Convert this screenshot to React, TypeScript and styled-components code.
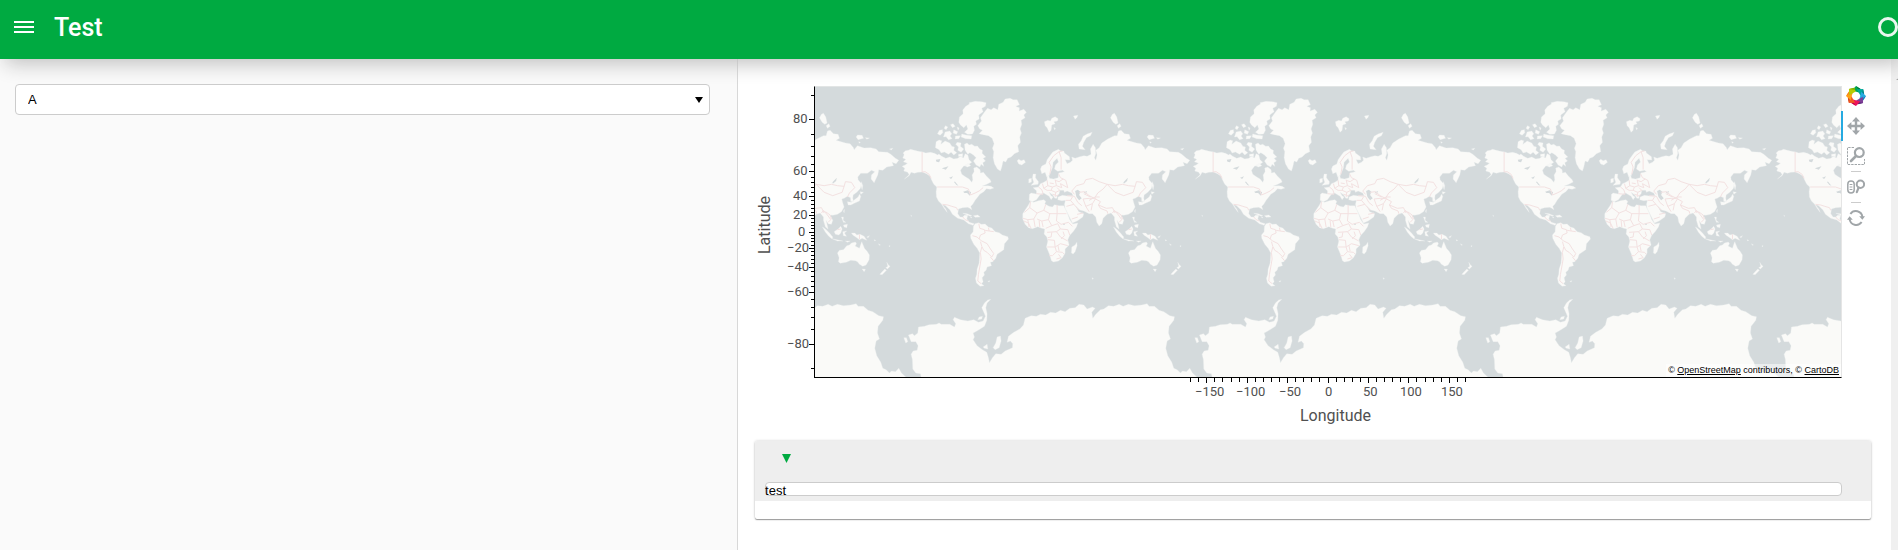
import React from "react";
import styled, { createGlobalStyle } from "styled-components";

const GREEN = "#00aa41";
const SEA = "#d4dadc";
const LAND = "#fafaf8";
const UI_FONT = '"Liberation Sans", Arial, sans-serif';

const GlobalStyle = createGlobalStyle`
  * { box-sizing: border-box; }
  html, body, #root { height: 100%; }
  body { margin: 0; background: #fff; font-family: ${UI_FONT}; overflow: hidden; }
`;

const Page = styled.div`
  display: flex;
  flex-direction: column;
  height: 100%;
`;

const Header = styled.header`
  position: relative;
  z-index: 1;
  display: flex;
  align-items: center;
  flex: none;
  height: 59px;
  padding: 0 0 5px 14px;
  background: ${GREEN};
  box-shadow: 5px 5px 20px silver;
`;

const MenuButton = styled.button`
  display: flex;
  padding: 0;
  border: 0;
  background: none;
  cursor: pointer;
`;

const Title = styled.a`
  margin-left: 20px;
  padding-top: 2px;
  color: #fff;
  font: 500 25px/32px Roboto, sans-serif;
  text-decoration: none;
`;

const BusyRing = styled.span`
  width: 20px;
  height: 20px;
  margin-left: auto;
  border: 3px solid #eaf7ef;
  border-radius: 50%;
`;

const Columns = styled.div`
  display: grid;
  grid-template-columns: 7fr 11fr;
  flex: 1;
  min-height: 0;
`;

const Sidebar = styled.aside`
  padding: 25px 27px 0 15px;
  background: #fafafa;
  border-right: 1px solid #d8d8d8;
`;

const SelectBox = styled.div`
  position: relative;
`;

const Select = styled.select`
  display: block;
  width: 100%;
  height: 31px;
  padding: 0 12px;
  border: 1px solid #ccc;
  border-radius: 4px;
  background: #fff;
  color: #000;
  font: 13px ${UI_FONT};
  appearance: none;
`;

const SelectArrow = styled.svg`
  position: absolute;
  top: 13px;
  right: 7px;
  pointer-events: none;
`;

const Main = styled.main`
  display: flex;
  min-width: 0;
  background: #fff;
`;

const Content = styled.div`
  flex: 1;
  min-width: 0;
  padding: 27px 20px 0 17px;
`;

const ScrollTrack = styled.div`
  flex: none;
  width: 7px;
  padding: 8px 0 0 5px;
  overflow: hidden;
  background: #f0f0f0;
`;

const Figure = styled.section`
  display: grid;
  grid-template-columns: 59px 1fr 29px;
  margin-bottom: 16px;
`;

const AxisSvg = styled.svg`
  display: block;
  overflow: visible;
`;

const XAxisRow = styled.div`
  grid-column: 2;
  display: flex;
  justify-content: center;
`;

const MapFrame = styled.div`
  position: relative;
  height: 292px;
  border: 1px solid;
  border-color: #e2e5e5 #e5e5e5 #000 #000;
`;

const MapSvg = styled.svg`
  display: block;
  width: 100%;
  height: 290px;
  background: ${SEA};
`;

const Attribution = styled.div`
  position: absolute;
  right: 0;
  bottom: 0;
  padding: 0 2px;
  background: rgba(255, 255, 255, 0.5);
  color: #000;
  font: 9px/13px ${UI_FONT};
  white-space: nowrap;

  a { color: #000; text-decoration: underline; }
`;

const Toolbar = styled.div`
  z-index: 1;
  display: flex;
  flex-direction: column;
  align-items: center;
  margin-left: -1px;
`;

const LogoLink = styled.a`
  display: flex;
  height: 25px;
`;

const ToolButton = styled.button<{ $active?: boolean }>`
  display: flex;
  align-items: center;
  justify-content: center;
  width: 30px;
  height: 30px;
  padding: 0 2px 0 0;
  border: 0;
  border-left: 2px solid ${(p) => (p.$active ? "#26aae1" : "transparent")};
  background: none;
  cursor: pointer;
`;

const ToolDivider = styled.hr`
  width: 10px;
  height: 1px;
  margin: 0;
  border: 0;
  background: #ccc;
`;

const Card = styled.section`
  border-radius: 2px;
  background: #fff;
  box-shadow: 0 1px 1px rgba(0, 0, 0, 0.35), 0 0 3px rgba(0, 0, 0, 0.2);
`;

const CardHeader = styled.div`
  height: 60px;
  padding: 6px 29px 0 10px;
  border-radius: 2px 2px 0 0;
  background: #eee;
`;

const CollapseButton = styled.button`
  display: flex;
  align-items: center;
  justify-content: center;
  width: 31px;
  height: 23px;
  margin: 0 0 12px 6px;
  padding: 0;
  border: 0;
  background: none;
  cursor: pointer;
`;

const Field = styled.div`
  position: relative;
`;

const FieldLabel = styled.label`
  position: absolute;
  top: 1px;
  left: 0;
  color: #000;
  font: 13px/16px ${UI_FONT};
`;

const TextInput = styled.input`
  display: block;
  width: 100%;
  height: 14px;
  padding: 0 12px;
  border: 1px solid #ccc;
  border-radius: 4px;
  background: #fff;
`;

const CardBody = styled.div`
  height: 18px;
`;

/* Web Mercator: one world is 291 px wide and high, with its centre at 0/0. */
const WORLD = 291;
const mercatorY = (lat: number) =>
  WORLD / 2 - (WORLD / (2 * Math.PI)) * Math.log(Math.tan(Math.PI / 4 + (lat * Math.PI) / 360));

const range = (from: number, to: number, step: number) =>
  Array.from({ length: Math.floor((to - from) / step) + 1 }, (_, i) => from + i * step);

const tickText = (n: number) => (n < 0 ? `\u2212${-n}` : `${n}`);

const axisText = { fill: "#505050", fontFamily: "Roboto, sans-serif" };

function LatitudeAxis() {
  return (
    <AxisSvg width="59" height="292" role="img" aria-label="Latitude axis">
      {range(-84, 84, 4).map((lat) => {
        const major = lat % 20 === 0;
        const y = Math.round(mercatorY(lat));
        return (
          <g key={lat}>
            <rect x={major ? 54 : 56} y={y} width={major ? 8 : 4} height="1" fill="#000" />
            {major && (
              <text {...axisText} fontSize="13" x={49 - Math.round(tickText(lat).length * 5.5)} y={y + 4}>
                {tickText(lat)}
              </text>
            )}
          </g>
        );
      })}
      <text {...axisText} fontSize="16" transform="translate(15 168) rotate(-90)">
        Latitude
      </text>
    </AxisSvg>
  );
}

function LongitudeAxis() {
  return (
    <XAxisRow>
      <AxisSvg width="300" height="47" role="img" aria-label="Longitude axis">
        {range(-170, 170, 10).map((lon) => {
          const major = lon % 50 === 0;
          const x = Math.floor(150 + (lon * WORLD) / 360);
          return (
            <g key={lon}>
              <rect x={x} y={major ? -3 : 0} width="1" height={major ? 8 : 4} fill="#000" />
              {major && (
                <text {...axisText} fontSize="13" x={x - Math.round(tickText(lon).length * 2.7)} y="18">
                  {tickText(lon)}
                </text>
              )}
            </g>
          );
        })}
        <text {...axisText} fontSize="16" x="122" y="43">
          Longitude
        </text>
      </AxisSvg>
    </XAxisRow>
  );
}

const LAND_SHAPES = [
  // Alaska, Canada, United States, Mexico, Central America
  "M283 263L287 253 284 248 291 241 300 240 306 237 318 240 330 243 343 245 352 248 366 246 378 249 388 254 391 251 400 258 412 264 424 260 436 266 448 264 456 258 465 263 470 250 478 254 482 268 490 276 478 284 465 288 456 300 460 312 472 320 482 326 490 336 493 328 491 314 497 304 496 293 505 290 515 298 516 308 525 306 533 316 545 328 548 335 535 342 522 347 538 346 548 348 556 353 545 357 534 355 526 364 514 372 508 380 500 390 493 402 487 408 490 418 484 414 478 411 462 412 450 416 448 430 455 440 463 440 468 435 478 434 475 446 483 456 497 460 494 465 480 460 466 449 448 444 432 432 424 418 410 405 402 404 412 416 416 426 407 414 399 401 390 392 384 380 383 364 385 350 376 342 369 328 365 318 354 310 342 305 328 306 318 309 308 306 302 316 288 326 302 313 298 306 286 302 289 294 281 288 290 284 297 279 285 274 292 267Z",
  // Baffin and its neighbours
  "M468 222L476 218 482 224 490 222 499 228 507 227 514 236 522 240 521 249 532 260 524 264 531 272 523 277 526 288 518 282 514 290 503 284 495 272 503 262 494 253 484 247 478 252 470 240Z",
  // Victoria, Banks
  "M381 232L383 214 392 209 400 211 397 222 410 212 424 218 430 228 438 230 436 240 445 247 436 254 428 246 420 252 408 245 398 248 392 238Z",
  "M387 190L393 180 402 178 403 187 395 195Z",
  "M410 185L424 182 430 190 425 197 431 205 420 208 413 199 405 200Z",
  "M411 166L418 170 413 178 407 174ZM426 163L434 160 440 168 432 172ZM446 170L452 173 449 180Z",
  "M436 178L448 184 444 192 434 188ZM441 197L456 196 451 205 440 206ZM460 191L472 194 490 196 488 206 472 205 458 200Z",
  "M446 216L458 218 456 228 466 236 458 246 448 240 450 230 442 222Z",
  "M450 252L463 250 462 260 450 258ZM468 286L480 279 487 286 477 290Z",
  // Ellesmere
  "M451 156L453 140 464 130 463 119 472 108 483 101 482 97 500 93 520 94 533 97 531 108 520 114 524 124 511 134 512 146 502 152 504 162 496 168 498 180 492 191 478 192 468 186 478 176 474 164 466 172 456 164Z",
  // Greenland
  "M508 166L519 152 516 142 526 128 537 114 548 118 556 112 568 118 571 102 584 96 590 86 605 84 614 88 626 88 633 103 622 108 633 112 632 122 646 117 654 126 646 134 650 142 638 150 640 162 635 176 639 188 634 200 636 216 628 226 631 244 618 250 608 260 598 264 592 275 584 272 580 290 576 302 567 296 558 280 554 262 556 244 552 234 557 220 551 204 540 196 524 193 512 190 522 180 514 176Z",
  // Iceland
  "M626 271L631 267 638 271 647 268 651 276 640 284 631 281Z",
  // Caribbean
  "M463 429L476 430 490 436 486 438 474 433ZM495 436L508 434 515 440 500 441ZM486 440L491 441 488 443Z",
  // South America
  "M495 468L500 460 511 457 518 462 530 461 540 470 550 473 560 484 572 487 582 494 598 499 600 506 588 520 586 538 576 545 566 552 562 564 553 574 546 576 549 586 536 590 533 600 526 606 528 614 521 622 524 634 519 640 527 646 515 648 504 638 501 624 505 612 506 596 512 578 514 548 506 534 496 522 487 504 486 494 494 484ZM538 633L544 631 542 635Z",
  // Africa
  "M643 446L643 430 652 416 660 404 666 393 676 396 690 391 706 388 712 393 709 401 722 408 732 410 738 403 752 406 766 406 772 418 778 432 784 448 793 461 808 458 804 470 794 484 784 495 778 508 782 524 770 536 770 548 762 562 750 572 735 575 729 571 724 554 714 530 718 512 715 500 707 491 709 476 700 474 688 469 672 475 660 472 650 462Z",
  "M789 548L790 530 800 524 805 516 806 526 800 544 794 551Z",
  // Europe and Asia
  "M662 390L663 372 668 368 684 371 684 361 674 352 690 350 696 340 706 336 716 330 716 321 721 314 723 324 735 326 749 322 751 308 768 304 762 300 748 303 738 296 741 284 750 275 746 264 734 276 732 292 728 302 722 316 715 320 710 306 700 310 696 296 700 287 712 281 716 268 724 257 733 245 750 237 757 242 766 242 768 248 783 259 784 269 770 268 776 280 786 276 792 270 790 260 800 264 814 259 826 256 836 258 848 252 846 236 854 222 861 232 862 250 858 262 862 270 866 254 862 240 872 232 880 218 898 206 918 196 926 196 930 182 938 180 948 190 962 192 966 204 956 210 984 218 998 220 1008 232 1010 238 1020 226 1040 233 1060 232 1076 236 1084 244 1110 246 1120 252 1134 264 1144 270 1136 280 1124 276 1128 286 1108 290 1096 300 1084 298 1081 314 1070 337 1061 326 1062 314 1072 304 1062 300 1050 309 1030 309 1021 320 1022 328 1032 340 1029 354 1018 366 1007 374 1006 384 1008 393 1000 394 999 382 990 378 980 384 973 386 976 398 980 410 972 424 960 432 946 435 938 434 946 450 942 462 932 460 926 450 932 476 924 470 918 450 918 440 908 428 896 432 884 444 880 460 872 467 865 456 862 440 852 430 842 430 826 422 814 419 802 408 811 424 826 430 823 440 806 452 792 458 780 434 770 414 768 402 771 390 760 391 748 388 749 380 762 375 776 377 794 376 790 368 776 362 768 366 766 360 754 360 752 370 746 376 746 384 739 384 733 374 722 366 728 376 734 380 728 388 722 378 712 372 706 368 696 372 684 388 672 394Z",
  "M674 311L682 311 681 322 690 334 689 342 668 345 676 336 672 324ZM661 326L669 324 669 335 661 338Z",
  "M708 154L718 150 726 152 730 144 740 139 749 145 747 152 736 154 740 160 730 164 728 180 722 186 716 172 710 166ZM736 172L741 173 739 179ZM795 137L808 135 806 141 800 147Z",
  "M812 236L810 222 818 212 824 198 836 191 851 186 846 196 834 202 826 216 822 228 830 238Z",
  "M906 142L912 132 918 129 925 140 929 158 922 162 914 156ZM926 166L934 160 938 168 930 174ZM1016 200L1020 194 1034 195 1038 204 1022 208ZM1044 202L1056 203 1048 207ZM1116 236L1126 234 1122 239ZM1024 214L1029 216 1025 219Z",
  "M1032 334L1036 346 1034 358 1030 344ZM1028 364L1038 366 1030 372ZM990 394L1002 396 1014 386 1022 380 1026 372 1030 378 1026 392 1012 398 1000 404 992 404ZM978 422L981 417 980 427Z",
  // Indonesia, Philippines, New Guinea
  "M915 470L924 476 936 488 946 500 944 506 934 498 924 486ZM944 505L962 509 976 512 960 512ZM950 484L962 476 970 468 974 476 970 488 964 494 954 492ZM976 484L988 482 981 488 987 498 978 496ZM972 440L978 440 977 450 985 456 978 456ZM978 464L990 462 988 472 980 470ZM1002 488L1012 488 1018 494 1028 492 1040 498 1048 510 1034 504 1026 508 1018 502 1006 494ZM1048 500L1056 496 1052 502ZM984 512L998 512 990 516Z",
  // Australia, Tasmania, New Zealand
  "M960 548L966 540 978 538 988 526 996 524 1002 518 1014 515 1017 520 1013 527 1026 534 1030 522 1033 514 1037 524 1041 534 1050 544 1056 554 1055 568 1046 584 1036 588 1026 582 1020 574 1014 571 1000 570 986 576 968 579 963 574 965 562ZM1034 596L1044 597 1040 604ZM1108 576L1113 584 1118 588 1110 596 1105 592 1111 588ZM1102 596L1107 600 1094 613 1087 612Z",
  // Islands
  "M851 622L855 625 852 627ZM1070 508L1075 510 1072 512ZM1083 520L1089 524 1086 525ZM1115 526L1118 526 1116 530ZM307 435L310 437 308 438Z",
  // Antarctica
  "M338 921L336 910 322 908 313 896 312 868 308 852 314 842 326 840 329 826 322 814 308 814 300 794 312 790 318 796 328 788 330 770 348 768 362 763 384 762 392 758 398 762 424 762 438 770 442 760 434 748 438 741 456 748 478 752 496 748 510 756 524 752 531 738 528 730 520 712 528 698 538 689 547 687 536 698 532 712 536 730 535 750 528 768 515 776 504 783 494 788 498 800 494 808 506 826 522 838 535 846 540 862 543 877 552 862 562 850 578 852 590 842 612 832 613 820 606 812 596 816 600 798 616 786 634 776 645 764 650 744 668 736 684 738 696 732 712 734 726 726 742 728 756 720 770 724 784 714 800 712 812 702 826 704 836 716 852 710 860 714 850 726 853 744 862 732 876 718 886 716 900 706 916 708 932 702 944 708 960 702 978 706 1000 704 1016 700 1022 708 1038 708 1052 720 1066 724 1084 736 1098 739 1096 750 1082 768 1080 788 1086 806 1076 812 1072 834 1078 856 1090 876 1096 894 1106 898 1116 908 1122 902 1134 904 1144 894 1152 908 1166 921Z",
  "M286 802L294 802 298 814 292 818ZM554 832L562 818 566 800 576 797 578 812 572 832 560 838ZM524 830L536 822 538 836 528 834ZM512 740L522 738 520 746 508 748Z",
];

const WATER_SHAPES =
  "M800 362L808 358 816 364 812 374 820 384 812 390 804 380ZM826 366L836 362 832 370ZM945 336L958 322 956 332 946 340ZM382 268L396 266 392 276 384 274ZM400 294L420 288 412 298ZM464 364L478 360 488 366 484 376 476 368 468 368ZM436 334L440 334 450 346 444 344ZM766 458L770 460 768 464 764 464ZM422 322L434 318 428 326Z";

const BORDERS = [
  "M341 245L341 305 350 304 362 312 368 324M386 350L462 350 480 356 486 374 500 368 512 362 524 352M402 402L418 404 430 408 444 412 448 420M463 440L470 448 480 452",
  // South America
  "M511 460L514 474 528 478 530 488 516 494 512 506 506 500 492 496M530 480L542 482 556 484M540 472L542 482M512 506L520 512 536 520 546 536 556 550 550 560 536 546 526 540 520 528 516 514M520 530L516 546 518 566 514 590 510 612 508 632 518 640M546 560L556 572",
  // Africa
  "M666 394L664 412 648 426M664 412L686 428 706 420 712 402M686 428L676 446 658 448 644 444M706 420L724 430 746 430 746 404M746 430L774 430M724 430L720 448 700 452 686 446M720 448L730 466 712 474M746 430L744 452 758 462 780 456 792 468M658 448L662 470M676 446L680 470M692 450L694 470M730 466L748 460 756 476 744 484 716 486M756 476L778 478 784 494M744 484L756 500 778 512M718 508L738 510 740 530 716 530M740 530L756 520 778 526M740 530L744 544 732 556 722 556M744 544L762 546 768 552M748 524L752 542M750 552L758 562 744 566M764 484L768 496 758 506M730 486L728 500 718 502M646 452L660 458 668 474M700 452L704 470",
  // Europe
  "M724 312L728 290 722 276 736 256 752 244 758 262 758 298M752 244L762 242M684 370L704 372M702 340L706 354 716 360M716 330L718 346 706 354M718 346L732 350 744 346 740 328M732 350L728 360 716 360M744 346L760 352 756 340 778 352 772 330 756 322 750 310M728 360L742 366 754 360M742 366L740 378 750 374M732 372L740 374M764 326L752 334 740 330M690 350L700 358 704 370M724 338L736 340M746 352L754 360",
  // Asia
  "M798 372L790 362 804 346 826 340 832 328 852 324 872 334 896 342 884 356 868 368 858 384 842 376 828 364 812 366M896 342L920 346 942 342 960 346 980 348 974 366 946 376 920 366 896 342M980 348L984 334 1002 336 1012 352 996 368 990 380M776 376L798 378 808 396 820 406M772 390L786 390 798 404 812 420M786 390L792 380M774 408L796 402M824 386L842 384 858 384 876 394 870 404 894 414 912 412 920 428M824 386L832 408 842 424M832 408L852 400 862 384M852 400L848 420M870 404L876 414 896 422 898 430M912 428L918 420 930 434 940 448 932 456M924 424L938 434 942 446M826 370L846 380M842 390L860 380 874 380M806 432L824 428M790 446L808 440",
  "M960 478L970 476M1026 492L1026 506",
];

function WorldMap() {
  return (
    <MapSvg viewBox="-855 50 3081 870" preserveAspectRatio="xMidYMid slice" role="img" aria-label="World map">
      <defs>
        <g id="world">
          <path d={LAND_SHAPES.join("")} fill={LAND} stroke="#eef0ef" strokeWidth="1" strokeLinejoin="round" />
          <path d={WATER_SHAPES} fill={SEA} />
          <path d={BORDERS.join("")} fill="none" stroke="#f3e1e1" strokeWidth="3" strokeLinejoin="round" />
        </g>
      </defs>
      {[-2, -1, 0, 1, 2].map((copy) => (
        <use key={copy} href="#world" x={copy * WORLD * 3} />
      ))}
    </MapSvg>
  );
}

const PETALS = ["#00a651", "#00a99d", "#27aae1", "#7f3f98", "#ed145b", "#f15a24", "#ff9e16", "#b4cc04"];
const PETAL_SHADES = ["#00793a", "#007c80", "#1b75bc", "#4f2170", "#c4004a", "#d6421a", "#f7801e", "#7fb000"];

function BokehLogo() {
  return (
    <svg width="20" height="20" viewBox="-10 -10 20 20">
      {PETALS.map((color, i) => (
        <g key={color} transform={`rotate(${i * 45})`}>
          <path d="M0 -10L4.6 -7 3 -3.4 -4.2 -5.4Z" fill={color} />
          <path d="M0 -10L4.6 -7 3.6 -4.8Z" fill={PETAL_SHADES[i]} />
        </g>
      ))}
    </svg>
  );
}

const ICON = "#a1a6a9";

const PanIcon = () => (
  <svg width="18" height="18" viewBox="0 0 18 18" fill={ICON}>
    <path d="M9 0L13 4.4H10.2V7.8H13.6V5L18 9 13.6 13V10.2H10.2V13.6H13L9 18 5 13.6H7.8V10.2H4.4V13L0 9 4.4 5V7.8H7.8V4.4H5Z" />
  </svg>
);

const BoxZoomIcon = () => (
  <svg width="18" height="18" viewBox="0 0 18 18" fill="none" stroke={ICON}>
    <path d="M7 0.5H0.5V17.5H17.5V12" strokeDasharray="2.4 1" />
    <circle cx="12.3" cy="5.6" r="4.4" strokeWidth="2.2" />
    <path d="M9 9L4 14" strokeWidth="2.6" strokeLinecap="round" />
  </svg>
);

const WheelZoomIcon = () => (
  <svg width="18" height="18" viewBox="0 0 18 18" fill="none" stroke={ICON}>
    <rect x="0.8" y="3" width="6.4" height="12" rx="3.2" strokeWidth="1.5" />
    <path d="M2.6 6.5H5.4M2.6 9H5.4M2.6 11.5H5.4" strokeWidth="1.2" />
    <circle cx="13.4" cy="6.2" r="3.7" strokeWidth="2" />
    <path d="M11.6 9.6L9.8 14.2" strokeWidth="2.2" strokeLinecap="round" />
  </svg>
);

const ResetIcon = () => (
  <svg width="18" height="18" viewBox="0 0 18 18" fill="none" stroke={ICON} strokeWidth="2">
    <path d="M3.4 5A6.6 6.6 0 0 1 15.4 8" />
    <path d="M14.6 13A6.6 6.6 0 0 1 2.6 10" />
    <path d="M12.2 7.2H18L15.4 10.8ZM0 10.8L2.6 7.2 5.8 10.8Z" fill={ICON} stroke="none" />
  </svg>
);

export default function App() {
  return (
    <Page>
      <GlobalStyle />
      <Header>
        <MenuButton type="button" aria-label="Toggle sidebar">
          <svg width="20" height="12" fill="#fff">
            <rect width="20" height="2" />
            <rect y="5" width="20" height="2" />
            <rect y="10" width="20" height="2" />
          </svg>
        </MenuButton>
        <Title href="#">Test</Title>
        <BusyRing />
      </Header>
      <Columns>
        <Sidebar>
          <SelectBox>
            <Select aria-label="Option" defaultValue="A">
              <option>A</option>
            </Select>
            <SelectArrow width="8" height="6">
              <path d="M0 0H8L4 6Z" />
            </SelectArrow>
          </SelectBox>
        </Sidebar>
        <Main>
          <Content>
            <Figure>
              <LatitudeAxis />
              <MapFrame>
                <WorldMap />
                <Attribution>
                  © <a href="#osm">OpenStreetMap</a> contributors, © <a href="#carto">CartoDB</a>
                </Attribution>
              </MapFrame>
              <Toolbar>
                <LogoLink href="#bokeh" aria-label="Bokeh">
                  <BokehLogo />
                </LogoLink>
                <ToolButton type="button" aria-label="Pan" $active>
                  <PanIcon />
                </ToolButton>
                <ToolButton type="button" aria-label="Box Zoom">
                  <BoxZoomIcon />
                </ToolButton>
                <ToolDivider />
                <ToolButton type="button" aria-label="Wheel Zoom">
                  <WheelZoomIcon />
                </ToolButton>
                <ToolDivider />
                <ToolButton type="button" aria-label="Reset">
                  <ResetIcon />
                </ToolButton>
              </Toolbar>
              <LongitudeAxis />
            </Figure>
            <Card>
              <CardHeader>
                <CollapseButton type="button" aria-label="Collapse">
                  <svg width="9" height="9" fill={GREEN}>
                    <path d="M0 0H9L4.5 9Z" />
                  </svg>
                </CollapseButton>
                <Field>
                  <TextInput id="card-text" type="text" />
                  <FieldLabel htmlFor="card-text">test</FieldLabel>
                </Field>
              </CardHeader>
              <CardBody />
            </Card>
          </Content>
          <ScrollTrack>
            <svg width="8" height="4" fill="#a0a0a0">
              <path d="M0 3L4 0 8 3Z" />
            </svg>
          </ScrollTrack>
        </Main>
      </Columns>
    </Page>
  );
}
